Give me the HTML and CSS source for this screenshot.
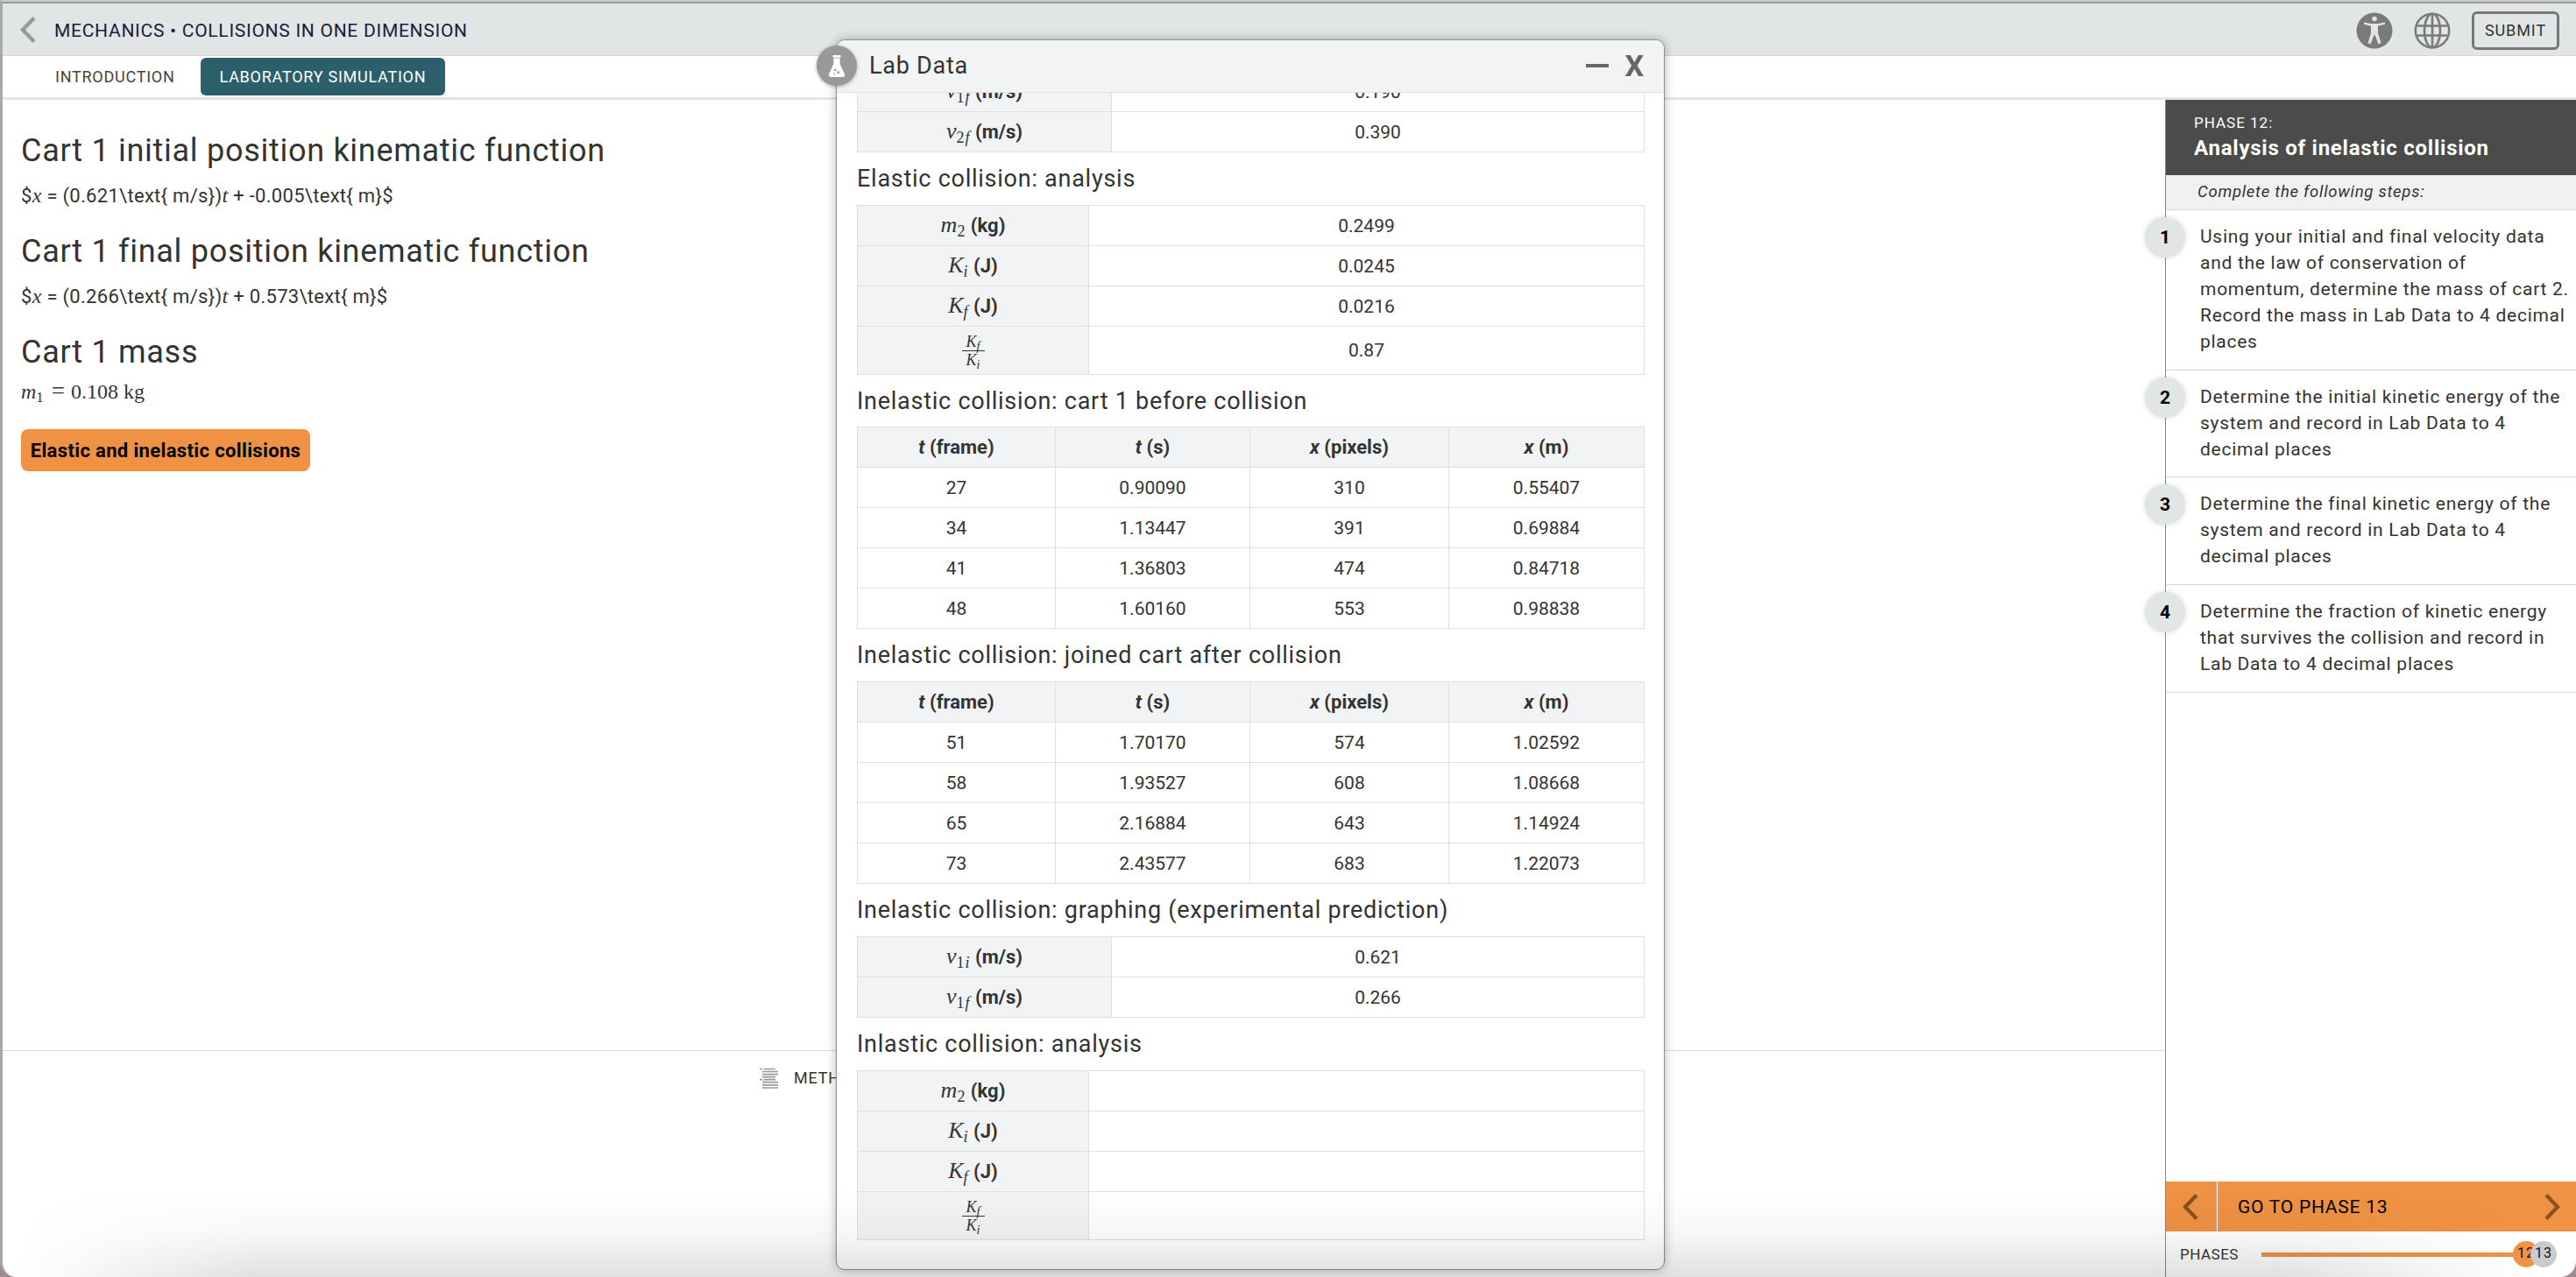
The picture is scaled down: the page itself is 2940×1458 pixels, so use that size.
FILE: index.html
```
<!DOCTYPE html>
<html lang="en">
<head>
<meta charset="utf-8">
<title>Mechanics - Collisions in One Dimension</title>
<link rel="stylesheet" href="styles.css">
</head>
<body>
<div class="window">
    <header class="topbar">
        <svg class="back" width="20" height="30" viewBox="0 0 20 30"><path d="M17 1.500L4 15l13 13.500" fill="none" stroke="#9a9a9a" stroke-width="4.500"/></svg>
        <h1>MECHANICS • COLLISIONS IN ONE DIMENSION</h1>
        <div class="tools">
            <svg width="42" height="42" viewBox="0 0 42 42">
                <circle cx="21" cy="21" r="20.500" fill="#7a7a7a"/>
                <circle cx="21" cy="7.500" r="2.800" fill="#e1e5e6"/>
                <path d="M9 11.500l8 1.600h8l8-1.600v2.300l-8 2v8l3.500 11.500-3 1L21.500 26h-1l-4 10.300-3-1L17 23.800v-8l-8-2z" fill="#e1e5e6"/>
            </svg>
            <svg width="42" height="42" viewBox="0 0 42 42" fill="none" stroke="#7a7a7a" stroke-width="2.600">
                <circle cx="21" cy="21" r="19.200"/>
                <ellipse cx="21" cy="21" rx="9" ry="19.200"/>
                <path d="M21 2v38M4 15.500h34M4 26.500h34"/>
            </svg>
            <button class="submit">SUBMIT</button>
        </div>
    </header>
    <nav class="tabs">
        <a>INTRODUCTION</a>
        <a class="active">LABORATORY SIMULATION</a>
    </nav>
    <div class="page">
        <main>
            <section class="sim">
                <h2>Cart 1 initial position kinematic function</h2>
                <p>$<i>x</i> = (0.621\text{ m/s})<i>t</i> + -0.005\text{ m}$</p>
                <h2>Cart 1 final position kinematic function</h2>
                <p>$<i>x</i> = (0.266\text{ m/s})<i>t</i> + 0.573\text{ m}$</p>
                <h2>Cart 1 mass</h2>
                <p class="tex"><i>m</i><sub>1</sub> <span>=</span> 0.108 kg</p>
                <button class="go">Elastic and inelastic collisions</button>
            </section>
            <footer>
                <svg width="22" height="25" viewBox="0 0 22 25" stroke="#999" stroke-width="1.700"><path d="M0 1.500h3M4.500 1.500H18M3 4.500h18M3 7.700h18M3 10.700h15M0 13.700h3M4.500 13.700H18M3 16.700h18M3 19.800h18M3 23h18"/></svg>
                <span>METHODS</span>
            </footer>
        </main>
        <aside>
            <div class="phase">
                <small>PHASE 12:</small>
                <strong>Analysis of inelastic collision</strong>
            </div>
            <div class="hint">Complete the following steps:</div>
            <ol>
                <li><b>1</b>Using your initial and final velocity data<br>and the law of conservation of<br>momentum, determine the mass of cart 2.<br>Record the mass in Lab Data to 4 decimal<br>places</li>
                <li><b>2</b>Determine the initial kinetic energy of the<br>system and record in Lab Data to 4<br>decimal places</li>
                <li><b>3</b>Determine the final kinetic energy of the<br>system and record in Lab Data to 4<br>decimal places</li>
                <li><b>4</b>Determine the fraction of kinetic energy<br>that survives the collision and record in<br>Lab Data to 4 decimal places</li>
            </ol>
            <div class="next">
                <span class="prev"><svg width="18" height="30" viewBox="0 0 18 30"><path d="M16 1.500L3 15l13 13.500" fill="none" stroke="#87521f" stroke-width="4.200"/></svg></span>
                <span class="label">GO TO PHASE 13</span>
                <svg width="18" height="30" viewBox="0 0 18 30"><path d="M2 1.500L15 15 2 28.500" fill="none" stroke="#87521f" stroke-width="4.200"/></svg>
            </div>
            <div class="phases">
                <span>PHASES</span>
                <div class="track"></div>
                <em>12</em><em class="last">13</em>
            </div>
        </aside>
    </div>
</div>

<div class="labdata">
    <div class="flask">
        <svg width="20" height="25" viewBox="0 0 22 28"><path d="M6 0h10v3H6zM7 4h8v7l6 13q1 4-3 4H4q-4 0-3-4l6-13z" fill="#fff"/><circle cx="9" cy="19" r="1.500" fill="#999"/><circle cx="13" cy="22" r="1.500" fill="#999"/><circle cx="8" cy="24" r="1" fill="#999"/></svg>
    </div>
    <div class="bar">
        <h2>Lab Data</h2>
        <span class="min"></span>
        <span class="close">X</span>
    </div>
    <div class="scroll">
        <table class="v">
            <tr><th><i>v</i><sub>1<i>f</i></sub> (m/s)</th><td>0.190</td></tr>
            <tr><th><i>v</i><sub>2<i>f</i></sub> (m/s)</th><td>0.390</td></tr>
        </table>
        <h3>Elastic collision: analysis</h3>
        <table class="k">
            <tr><th><i>m</i><sub>2</sub> (kg)</th><td>0.2499</td></tr>
            <tr><th><i>K</i><sub><i>i</i></sub> (J)</th><td>0.0245</td></tr>
            <tr><th><i>K</i><sub><i>f</i></sub> (J)</th><td>0.0216</td></tr>
            <tr class="tall"><th><span class="frac"><span><i>K</i><sub><i>f</i></sub></span><span><i>K</i><sub><i>i</i></sub></span></span></th><td>0.87</td></tr>
        </table>
        <h3 class="tight">Inelastic collision: cart 1 before collision</h3>
        <table class="d">
            <tr><th><em>t</em> (frame)</th><th><em>t</em> (s)</th><th><em>x</em> (pixels)</th><th><em>x</em> (m)</th></tr>
            <tr><td>27</td><td>0.90090</td><td>310</td><td>0.55407</td></tr>
            <tr><td>34</td><td>1.13447</td><td>391</td><td>0.69884</td></tr>
            <tr><td>41</td><td>1.36803</td><td>474</td><td>0.84718</td></tr>
            <tr><td>48</td><td>1.60160</td><td>553</td><td>0.98838</td></tr>
        </table>
        <h3>Inelastic collision: joined cart after collision</h3>
        <table class="d">
            <tr><th><em>t</em> (frame)</th><th><em>t</em> (s)</th><th><em>x</em> (pixels)</th><th><em>x</em> (m)</th></tr>
            <tr><td>51</td><td>1.70170</td><td>574</td><td>1.02592</td></tr>
            <tr><td>58</td><td>1.93527</td><td>608</td><td>1.08668</td></tr>
            <tr><td>65</td><td>2.16884</td><td>643</td><td>1.14924</td></tr>
            <tr><td>73</td><td>2.43577</td><td>683</td><td>1.22073</td></tr>
        </table>
        <h3>Inelastic collision: graphing (experimental prediction)</h3>
        <table class="v">
            <tr><th><i>v</i><sub>1<i>i</i></sub> (m/s)</th><td>0.621</td></tr>
            <tr><th><i>v</i><sub>1<i>f</i></sub> (m/s)</th><td>0.266</td></tr>
        </table>
        <h3>Inlastic collision: analysis</h3>
        <table class="k">
            <tr><th><i>m</i><sub>2</sub> (kg)</th><td></td></tr>
            <tr><th><i>K</i><sub><i>i</i></sub> (J)</th><td></td></tr>
            <tr><th><i>K</i><sub><i>f</i></sub> (J)</th><td></td></tr>
            <tr class="tall"><th><span class="frac"><span><i>K</i><sub><i>f</i></sub></span><span><i>K</i><sub><i>i</i></sub></span></span></th><td></td></tr>
        </table>
    </div>
</div>
<div class="shade"></div>
</body>
</html>
```
FILE: styles.css
```
* {box-sizing:border-box;}
body,h1,h2,h3,p,ol {margin:0; padding:0; font-weight:400;}
body {height:1458px; overflow:hidden; background:#9c8a92; color:#333; font-family:Roboto,sans-serif; position:relative;}
button {font-family:inherit; margin:0; padding:0;}

.window {height:1458px; display:flex; flex-direction:column; background:#fff; border-left:3px solid #a9a9a9; border-top:2px solid #c9c9cb; border-radius:0 0 18px 18px; overflow:hidden;}

.topbar {height:62px; flex:none; display:flex; align-items:center; padding:0 19px 0 19px; background:#e1e5e6; border-top:2px solid #969899; border-bottom:1px solid #d3d6d7;}
.topbar h1 {margin:2px 0 0 20px; font-size:21px; line-height:24px; letter-spacing:0.72px; color:#16203c;}
.tools {margin-left:auto; display:flex; align-items:center; gap:24px; padding-top:2px;}
.submit {width:100px; height:44px; border:3px solid #777; border-radius:6px; background:none; color:#333; font-size:18px; letter-spacing:0.9px;}

.tabs {height:50px; flex:none; display:flex; padding:2px 0 0 38px; border-bottom:3px solid #e1e5e6;}
.tabs a {height:43px; line-height:43px; padding:0 22px; border-radius:6px; font-size:18px; letter-spacing:0.75px; color:#444;}
.tabs .active {margin-left:7px; background:#2b5f6b; color:#fff;}

.page {flex:1; display:flex; min-height:0;}
main {flex:1; display:flex; flex-direction:column;}
.sim {flex:1; padding:34px 21px 0;}
.sim h2 {font-size:36px; line-height:48px; letter-spacing:0.72px;}
.sim p {font-size:22px; line-height:28px; margin:14px 0 25px; letter-spacing:0.3px;}
.sim p i {font-family:"Liberation Serif",serif; font-size:24px; line-height:0;}
.sim .tex {font:24px/28px "Liberation Serif",serif; margin:7px 0 29px; letter-spacing:0;}
.tex span {margin:0 1px 0 3px; font-size:27px; line-height:0;}
sub {font-size:70%; line-height:0; vertical-align:-0.25em;}
.go {width:330px; height:48px; border:0; border-radius:8px; background:#ef9244; font-size:22px; font-weight:700; letter-spacing:0.36px; white-space:nowrap;}
footer {height:259px; display:flex; padding:19px 0 0 864px; border-top:1px solid #d9d9d9;}
footer span {margin-left:17px; font-size:18px; line-height:24px; letter-spacing:0.8px;}

aside {width:469px; display:flex; flex-direction:column; border-left:1px solid #888;}
.phase {height:86px; padding:14px 32px; background:#4b4b4b; color:#fff;}
.phase small {display:block; font-size:17px; line-height:24px; letter-spacing:1px;}
.phase strong {display:block; font-size:24px; line-height:34px; letter-spacing:0.75px; white-space:nowrap;}
.hint {height:40px; padding-left:36px; line-height:39px; background:#f1f1f1; border-bottom:1px solid #d6d6d6; font-size:18.500px; font-style:italic; letter-spacing:0.75px;}
ol {flex:1; list-style:none;}
li {position:relative; padding:15px 0 16.700px 39px; border-bottom:1px solid #d6d6d6; font-size:21px; line-height:30px; letter-spacing:0.72px; white-space:nowrap;}
li b {position:absolute; left:-24px; top:8px; width:46px; height:46px; border-radius:50%; background:#e1e5e6; box-shadow:0 0 6px rgba(0,0,0,.15); color:#000; text-align:center; line-height:46px; letter-spacing:0;}
.next {height:57px; display:flex; align-items:center; background:#ef9244; color:#000; padding-right:18px;}
.prev {width:59px; height:57px; padding:14px 0 0 19px; border-right:1px solid #fff;}
.label {flex:1; padding-left:23px; font-size:21px; letter-spacing:0.75px;}
.phases {height:52px; display:flex; align-items:center; padding:0 22px 0 16px; font-size:17px; letter-spacing:0.5px;}
.track {flex:1; height:5px; margin-left:26px; background:#ef9244;}
.phases em {width:30px; height:30px; margin-left:-2px; border-radius:50%; background:#ef9244; color:#111; font-style:normal; font-size:16px; line-height:28px; text-align:center; letter-spacing:1px;}
.phases .last {margin-left:-10px; background:#cbcbcb;}

/* Lab Data window */
.labdata {position:absolute; left:954px; top:45px; width:946px; height:1405px; display:flex; flex-direction:column; background:#fff; border:1px solid #8d8d8d; border-radius:10px; box-shadow:0 0 12px rgba(0,0,0,.28);}
.flask {position:absolute; left:-23px; top:6px; width:46px; height:46px; border-radius:50%; background:#999; display:flex; justify-content:center; align-items:center; box-shadow:0 1px 4px rgba(0,0,0,.3);}
.bar {height:60px; flex:none; display:flex; align-items:center; padding:0 23px 2px 37px; background:#f2f3f5; border-bottom:1px solid #dfe0e2; border-radius:10px 10px 0 0;}
.bar h2 {font-size:27px; letter-spacing:0.75px; flex:1;}
.min {width:26px; height:4px; background:#666; margin-right:18px;}
.close {font-size:34px; font-weight:700; color:#666; text-shadow:0 2px #fff;}
.scroll {flex:1; min-height:0; overflow:hidden; display:flex; flex-direction:column; justify-content:flex-end; padding:0 22px 33px 23px;}
.scroll > * {flex:none;}
.scroll h3 {height:60px; line-height:60px; font-size:27px; letter-spacing:0.74px; white-space:nowrap;}
.scroll .tight {height:59px;}
table {width:899px; table-layout:fixed; border-collapse:collapse; font-size:21px; text-align:center;}
th,td {height:46px; padding:0; border:1px solid #dfdfe1; line-height:30px;}
th {background:#f2f3f5; font-size:22px;}
.tall th,.tall td {height:55px;}
.v th {width:290px;}
.k th {width:264px;}
.d th:nth-child(1) {width:226px;}
.d th:nth-child(2) {width:222px;}
.d th:nth-child(3) {width:227px;}
th > i,th sub,.frac {font-family:"Liberation Serif",serif; font-weight:400;}
th > i {font-size:26px; line-height:0;}
th sub {font-size:18px; letter-spacing:1px;}
.frac {display:inline-flex; flex-direction:column; width:26px; font-size:18px; line-height:20px; vertical-align:middle;}
.frac sub {font-size:14px; letter-spacing:0;}
.frac span + span {border-top:1px solid #333;}

.shade {position:absolute; left:0; right:0; bottom:0; height:100px; pointer-events:none; background:linear-gradient(rgba(0,0,0,0),rgba(0,0,0,.03) 50%,rgba(0,0,0,.12)); mask-image:linear-gradient(90deg,transparent 20px,#000 300px,#000 2600px,transparent 2880px);}
```
